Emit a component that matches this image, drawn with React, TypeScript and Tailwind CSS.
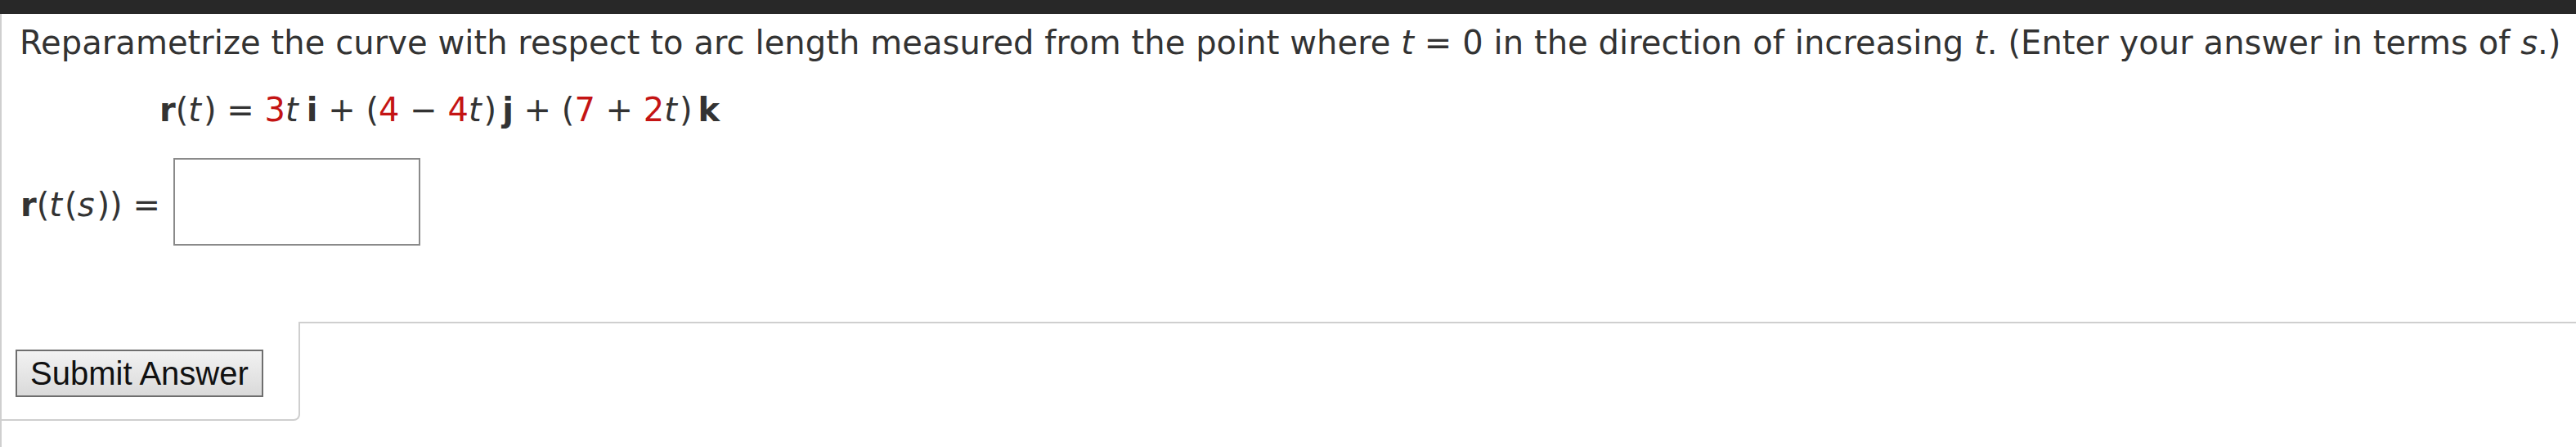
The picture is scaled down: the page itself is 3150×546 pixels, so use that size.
export default function App() {
  const red = "text-[#c41414]";
  const vec = "font-bold ml-[7px]";
  const it = "italic pr-[3px]";
  return (
    <div className="w-[3150px] h-[546px] bg-white flex flex-col overflow-hidden">
      <div className="h-[17px] bg-[#282828] shrink-0" />
      <div className="flex-1 border-l-2 border-[#cfcfcf] flex flex-col text-[#333] font-['DejaVu_Sans',Verdana,sans-serif] text-[40px] leading-[48px]">
        <p className="pt-[11px] pl-[22px] whitespace-nowrap tracking-[0.07px]">
          Reparametrize the curve with respect to arc length measured from the point where <i>t</i> = 0 in the
          direction of increasing <i>t</i>. (Enter your answer in terms of <i>s</i>.)
        </p>

        <p className="mt-[34px] pl-[193px] whitespace-nowrap">
          <b>r</b>(<i className={it}>t</i>) = <span className={red}>3</span><i className={it}>t</i><span className={vec}>i</span> + (<span className={red}>4</span> − <span className={red}>4</span><i className={it}>t</i>)<span className={vec}>j</span> + (<span className={red}>7</span> + <span className={red}>2</span><i className={it}>t</i>)<span className={vec}>k</span>
        </p>

        <div className="mt-[35px] flex items-start">
          <span className="mt-[33px] pl-[23px] w-[210px] whitespace-nowrap">
            <b>r</b>(<i className={it}>t</i>(<i className={it}>s</i>)) =
          </span>
          <input
            type="text"
            aria-label="answer"
            className="w-[302px] h-[107px] border-2 border-[#8a8a8a] bg-white outline-none"
          />
        </div>

        <div className="mt-[93px] flex">
          <div className="w-[365px] h-[121px] border-r-2 border-b-2 border-[#cfcfcf] rounded-br-[8px] pl-[17px] pt-[34px]">
            <button className="h-[58px] px-[16px] border-2 border-[#6e6e6e] bg-gradient-to-b from-[#f2f2f2] to-[#dadada] text-[#111] font-['Liberation_Sans',Arial,sans-serif] text-[40px] leading-none whitespace-nowrap">
              Submit Answer
            </button>
          </div>
          <div className="flex-1 border-t-2 border-[#cfcfcf]" />
        </div>
      </div>
    </div>
  );
}
